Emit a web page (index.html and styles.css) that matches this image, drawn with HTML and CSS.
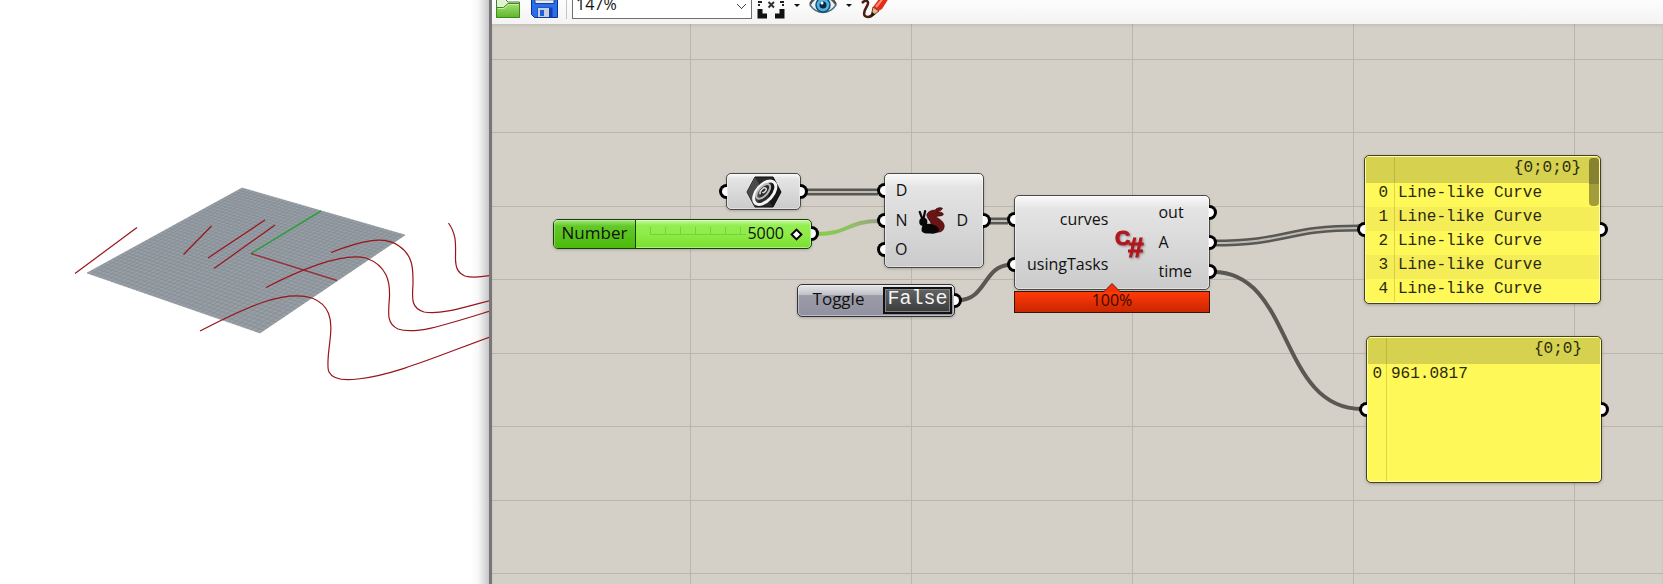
FILE: index.html
```html
<!DOCTYPE html>
<html lang="en">
<head>
    <meta charset="UTF-8">
    <meta name="viewport" content="width=device-width, initial-scale=1.0">
    <title>Grasshopper</title>
    <link rel="stylesheet" href="styles.css">
</head>
<body>
    <main class="workspace">
        <section class="viewport">
            <svg class="scene" width="489" height="584">
                <polygon class="plane" points="242,188 405,235 260,333 87,273"/>
                <path id="grid" class="plane-grid"/>
                <path class="axis-y" d="M251 253.5L321 211"/>
                <path class="axis-x" d="M251 253.5L337 280.5"/>
                <g class="curves">
                    <path d="M75 273.500L137 227.500"/>
                    <path d="M183.500 254.500L211.500 226"/>
                    <path d="M208 258L265 220"/>
                    <path d="M214 268.500L275 225"/>
                    <path d="M331 252.500C360 241 384 235 399 246C414 256 413 271 413 284C412 299 411 308 424 312C440 315 462 308 490 300.500"/>
                    <path d="M266 287.500C300 270 341 252 366 258C388 266 390 283 389.500 297C388 315 387 324 398 329C415 335 445 325 490 311"/>
                    <path d="M200 331C250 305 285 290 312 298C330 305 332 320 330.500 335C329 352 326 366 329 372C333 380 346 380.500 358 379C395 375 440 355 490 337"/>
                    <path d="M448.500 223C457 235 455.500 245 455.500 258C455.500 268 458 273 465 276C472 278 482 277 490 275.500"/>
                </g>
            </svg>
        </section>

        <section class="editor">
            <header class="toolbar">
                <button class="tool" aria-label="Open">
                    <svg width="28" height="28" viewBox="0 0 28 28">
                        <path d="M2.500 26.500V8H11L14 11H25.500V26.500Z" fill="#dff3d2" stroke="#4b7a3a"/>
                        <path d="M2.500 26.500V16.500H9.500L14 12.500H25.500V26.500Z" fill="url(#folder)" stroke="#3f8a20"/>
                        <path d="M4 17.500H10L14.500 13.500H24.500" fill="none" stroke="#c4f09c"/>
                        <defs>
                            <linearGradient id="folder" x1="0" y1="0" x2="0" y2="1">
                                <stop offset="0" stop-color="#a5e070"/>
                                <stop offset="1" stop-color="#5fb52c"/>
                            </linearGradient>
                        </defs>
                    </svg>
                </button>
                <button class="tool" aria-label="Save">
                    <svg width="28" height="28" viewBox="0 0 28 28">
                        <path d="M1.500 1.500H27.500V26.500H4.500L1.500 23.500Z" fill="#2b6fe8" stroke="#0b2f9c"/>
                        <path d="M5 1H24V12.500H5Z" fill="#e9edf3" stroke="#12409f"/>
                        <path d="M6 9.500H23" stroke="#b9bec8"/>
                        <path d="M7.500 16.500H22.500V26.500H7.500Z" fill="#143fae"/>
                        <path d="M8 17H19V26H8Z" fill="#c9cfda"/>
                        <path d="M10 19H14V25H10Z" fill="#1d5fd8"/>
                    </svg>
                </button>
                <span class="separator"></span>
                <select class="zoom" aria-label="Zoom">
                    <option>147%</option>
                </select>
                <button class="tool focus" aria-label="Zoom extents">
                    <svg width="28" height="28" viewBox="0 0 28 28">
                        <path d="M3 18V25H10M18 25H25V18M3 8V3H10M18 3H25V8" fill="none" stroke="#111" stroke-width="5"/>
                        <path d="M11.500 11L17 16.500M17 11L11.500 16.500" stroke="#333" stroke-width="2"/>
                        <path d="M1 11H5M1 14H3M23 11H27M25 14H27" stroke="#222" stroke-width="2"/>
                    </svg>
                </button>
                <button class="drop" aria-label="Zoom options"></button>
                <button class="tool flush" aria-label="Preview">
                    <svg width="28" height="28" viewBox="0 0 28 28">
                        <path d="M1 14C7 3 20 3 27 14C20 24 8 24 1 14Z" fill="#e6f3f8" stroke="#51707c" stroke-width="1.500"/>
                        <circle cx="14" cy="14" r="7" fill="#4fb4e2" stroke="#1b4d70" stroke-width="1.500"/>
                        <circle cx="14" cy="14" r="3.500" fill="#082842"/>
                        <circle cx="13" cy="12" r="1.500" fill="#fff"/>
                        <path d="M1 13C7 1 20 1 27 13" fill="none" stroke="#5b4a42" stroke-width="2"/>
                    </svg>
                </button>
                <button class="drop" aria-label="Preview options"></button>
                <button class="tool flush" aria-label="Sketch">
                    <svg width="28" height="28" viewBox="0 0 28 28">
                        <path d="M1 12C5 8 9 10 6 15C3 20 1 26 7 26C11 26 12 23 13 20" fill="none" stroke="#4a1c16" stroke-width="2.500"/>
                        <path d="M12 16L21 4L28 7L21 18L14 22Z" fill="#e22c1c"/>
                        <path d="M15 16L24 5" stroke="#ff8f78" stroke-width="2"/>
                        <path d="M12 16L18 20L10 26Z" fill="#e5b48c" stroke="#7a3a22"/>
                        <path d="M11 21L14.500 23.500L9.500 26.500Z" fill="#2a120c"/>
                    </svg>
                </button>
            </header>

            <div class="canvas">
                <svg class="wires">
                    <defs>
                        <linearGradient id="green-wire">
                            <stop offset="0" stop-color="#82cf45"/>
                            <stop offset="0.6" stop-color="#93bd67"/>
                            <stop offset="1" stop-color="#9a9f88"/>
                        </linearGradient>
                    </defs>
                    <g class="wire-outer">
                        <path d="M314 168H386"/>
                        <path d="M497 197H516"/>
                        <path d="M721 219C797 219 792 204 868 204"/>
                    </g>
                    <g class="wire-inner">
                        <path d="M314 168H386"/>
                        <path d="M497 197H516"/>
                        <path d="M721 219C797 219 792 204 868 204"/>
                    </g>
                    <g class="wire">
                        <path d="M325 210C356 210 356 197 387 197" stroke="url(#green-wire)"/>
                        <path d="M467 276C494 276 492 241 518 241"/>
                        <path d="M721 248C802 248 786 385 870 385"/>
                    </g>
                </svg>

                <div class="node param" id="geometry">
                    <i class="port in"></i>
                    <svg width="36" height="32" viewBox="0 0 36 32">
                        <path d="M9 1H27L35 16L27 31H9L1 16Z" fill="#2b2b2b" stroke="#111"/>
                        <path d="M9 1L1 16L9 31L14 20L13 8Z" fill="#4a4a4a"/>
                        <path d="M27 1L35 16L27 31L22 24Z" fill="#161616"/>
                        <g transform="rotate(-48 18 16)" fill="none">
                            <ellipse cx="18" cy="17" rx="14" ry="8" stroke="#f4f4f4" stroke-width="3"/>
                            <ellipse cx="18" cy="15" rx="9" ry="4.500" stroke="#b9b9b9" stroke-width="2"/>
                            <path d="M14 15C14 12 22 12 22 15C22 17 16 17 17 15" stroke="#ddd" stroke-width="1.500"/>
                        </g>
                    </svg>
                    <i class="port out"></i>
                </div>

                <div class="node slider" id="number">
                    <label for="count">Number</label>
                    <div class="track">
                        <input type="range" id="count" min="0" max="5000" value="5000">
                        <output for="count">5000</output>
                    </div>
                    <i class="port out"></i>
                </div>

                <div class="node component" id="populate">
                    <ul class="inputs">
                        <li><i class="port in"></i>D</li>
                        <li><i class="port in"></i>N</li>
                        <li><i class="port in"></i>O</li>
                    </ul>
                    <svg width="32" height="32" viewBox="0 0 32 32">
                        <path d="M11 9C12 5 17 4 20 4C22 1 27 1 28 2C28 4 24 5 22 6C25 6 29 6 29 9C27 11 23 10 21 11C22 13 29 15 30 21C30 27 26 29 20 28L15 20C17 17 11 14 11 9Z" fill="#6b1416" stroke="#3d0b0c"/>
                        <path d="M3 6L6 14M9 5L7 14" stroke="#080808" stroke-width="2.500" stroke-linecap="round"/>
                        <ellipse cx="7" cy="17" rx="4.500" ry="4.500" fill="#080808"/>
                        <path d="M8 20C12 18 18 19 22 22C27 26 23 30 17 30C11 30 5 30 5 26C5 23 6 21 8 20Z" fill="#080808"/>
                    </svg>
                    <ul class="outputs">
                        <li>D<i class="port out"></i></li>
                    </ul>
                </div>

                <div class="node toggle" id="toggle">
                    <label for="tasks">Toggle</label>
                    <button id="tasks">False</button>
                    <i class="port out"></i>
                </div>

                <div class="node component" id="script">
                    <ul class="inputs">
                        <li><i class="port in"></i>curves</li>
                        <li><i class="port in"></i>usingTasks</li>
                    </ul>
                    <svg class="csharp" width="34" height="40" viewBox="0 0 34 40">
                        <text x="1" y="22">C</text>
                        <text x="14" y="34" class="sharp">#</text>
                    </svg>
                    <ul class="outputs">
                        <li>out<i class="port out"></i></li>
                        <li>A<i class="port out"></i></li>
                        <li>time<i class="port out"></i></li>
                    </ul>
                    <div class="profiler">100%</div>
                </div>

                <div class="node panel" id="curve-list">
                    <i class="port in"></i>
                    <table>
                        <thead>
                            <tr><th class="index"></th><th>{0;0;0}</th></tr>
                        </thead>
                        <tbody>
                            <tr><td class="index">0</td><td>Line-like Curve</td></tr>
                            <tr><td class="index">1</td><td>Line-like Curve</td></tr>
                            <tr><td class="index">2</td><td>Line-like Curve</td></tr>
                            <tr><td class="index">3</td><td>Line-like Curve</td></tr>
                            <tr><td class="index">4</td><td>Line-like Curve</td></tr>
                        </tbody>
                    </table>
                    <span class="scrollbar"></span>
                    <i class="port out"></i>
                </div>

                <div class="node panel" id="timing">
                    <i class="port in"></i>
                    <table>
                        <thead>
                            <tr><th class="index"></th><th>{0;0}</th></tr>
                        </thead>
                        <tbody>
                            <tr><td class="index">0</td><td>961.0817</td></tr>
                        </tbody>
                    </table>
                    <i class="port out"></i>
                </div>
            </div>
        </section>
    </main>

    <script src="script.js"></script>
</body>
</html>
```
FILE: styles.css
```css
* {
    box-sizing: border-box;
}

body {
    margin: 0;
    font-family: "Open Sans", "Noto Sans", sans-serif;
    font-size: 16px;
    color: #111;
}

button, select, input {
    margin: 0;
    padding: 0;
    font: inherit;
    color: inherit;
}

ul {
    margin: 0;
    padding: 0;
    list-style: none;
}

.workspace {
    display: flex;
    height: 100vh;
    overflow: hidden;
}

/* 3d view */
.viewport {
    flex: 0 0 489px;
    overflow: hidden;
    background: linear-gradient(to right, rgba(0,0,0,0) 0, rgba(0,0,0,0.03) 40%, rgba(0,0,0,0.22) 100%) right / 18px 100% no-repeat #fff;
}

.scene {
    display: block;
}

.plane {
    fill: #979ea4;
}

.plane-grid {
    fill: none;
    stroke: #828a93;
    stroke-width: 0.6;
}

.axis-x, .axis-y {
    fill: none;
    stroke: #94343c;
    stroke-width: 1.5;
}

.axis-y {
    stroke: #2f9c3f;
}

.curves {
    fill: none;
    stroke: #99141c;
    stroke-width: 1.2;
}

/* editor window */
.editor {
    flex: 1;
    min-width: 0;
    display: flex;
    flex-direction: column;
    border-left: 3px solid #77757a;
}

.toolbar {
    flex: 0 0 24px;
    display: flex;
    align-items: flex-end;
    padding: 0 0 5px 2px;
    overflow: hidden;
    background: linear-gradient(#fdfdfd, #f3f3f3);
}

.tool {
    flex: none;
    width: 28px;
    height: 28px;
    margin-right: 8px;
    border: 0;
    background: none;
}

.tool svg {
    display: block;
}

.tool.focus, .tool.flush {
    margin-right: 0;
}

.separator {
    width: 1px;
    height: 28px;
    margin-right: 5px;
    background: #c4c4c4;
}

.zoom {
    flex: none;
    width: 180px;
    height: 28px;
    margin-right: 5px;
    padding: 0 3px 2px;
    appearance: none;
    border: 1px solid #707070;
    border-radius: 0;
    background: #fff;
    background-image: linear-gradient(45deg, transparent 44%, #444 44%, #444 58%, transparent 58%), linear-gradient(-45deg, transparent 44%, #444 44%, #444 58%, transparent 58%);
    background-size: 5px 5px;
    background-position: 164px 12px, 168px 12px;
    background-repeat: no-repeat;
}

.drop {
    flex: none;
    display: flex;
    justify-content: center;
    width: 24px;
    height: 28px;
    padding-top: 13px;
    border: 0;
    background: none;
}

.drop::after {
    content: "";
    border: 3px solid transparent;
    border-top-color: #111;
    border-bottom: 0;
}

/* canvas */
.canvas {
    flex: 1;
    position: relative;
    overflow: hidden;
    background-color: #d4d0c8;
    background-image:
        linear-gradient(to right, #bab6af 1px, transparent 1px),
        linear-gradient(#bab6af 1px, transparent 1px),
        linear-gradient(#bab6af 1px, transparent 1px);
    background-size: 221px 100%, 100% 147px, 100% 147px;
    background-position: 198px 0, 0 35px, 0 108px;
    box-shadow: inset 0 2px 3px rgba(0,0,0,0.08);
}

.wires {
    position: absolute;
    inset: 0;
    width: 100%;
    height: 100%;
}

.wires path {
    fill: none;
}

.wire {
    stroke: #5a5853;
    stroke-width: 4;
}

.wire-outer {
    stroke: #5a5853;
    stroke-width: 7;
}

.wire-inner {
    stroke: #bdbab3;
    stroke-width: 2;
}

/* nodes */
.node {
    position: absolute;
    display: flex;
    align-items: center;
    border: 1px solid #4a4a4a;
    border-radius: 5px;
    background: linear-gradient(#fafafa 0, #e4e4e4 14%, #cbcbcb 100%);
    box-shadow: inset 0 0 0 1px rgba(255,255,255,0.4), 0 1px 3px rgba(0,0,0,0.2);
}

#geometry { left: 234px; top: 149px; width: 75px; height: 37px; }
#number { left: 61px; top: 195px; width: 259px; height: 30px; }
#populate { left: 392px; top: 149px; width: 100px; height: 95px; }
#toggle { left: 305px; top: 260px; width: 158px; height: 33px; }
#script { left: 522px; top: 171px; width: 196px; height: 95px; }
#curve-list { left: 872px; top: 131px; width: 237px; height: 149px; }
#timing { left: 874px; top: 312px; width: 236px; height: 147px; }

.port {
    position: absolute;
    top: 50%;
    width: 8px;
    height: 15px;
    margin-top: -8px;
    border: 3px solid #000;
    background: #fff;
}

.port.in {
    left: -8px;
    border-right: 0;
    border-radius: 8px 0 0 8px;
}

.port.out {
    right: -8px;
    border-left: 0;
    border-radius: 0 8px 8px 0;
}

.param {
    justify-content: center;
}

.component {
    justify-content: space-between;
}

.inputs, .outputs {
    align-self: stretch;
    display: flex;
    flex-direction: column;
    padding: 2px 0;
}

.inputs li, .outputs li {
    flex: 1;
    position: relative;
    display: flex;
    align-items: center;
    padding: 0 10px 2px;
    line-height: 20px;
}

.inputs li {
    justify-content: flex-end;
}

#populate .outputs li {
    padding-right: 15px;
}

#script .outputs li {
    padding-right: 17px;
}

#script .inputs li {
    padding-right: 6px;
    padding-left: 12px;
}

.csharp text {
    font: bold 21px "Liberation Sans", sans-serif;
    fill: #b3161e;
    stroke: #b3161e;
    filter: drop-shadow(1px 1px 1px rgba(0,0,0,0.4));
}

.csharp .sharp {
    font-size: 28px;
}

.profiler {
    position: absolute;
    left: -1px;
    right: -1px;
    top: 95px;
    height: 22px;
    border: 1px solid #3a1208;
    background: linear-gradient(#ff3a08, #c92600);
    color: #3a0a00;
    line-height: 16px;
    text-align: center;
}

.profiler::before {
    content: "";
    position: absolute;
    left: 50%;
    top: -8px;
    margin-left: -8px;
    border: 8px solid transparent;
    border-top: 0;
    border-bottom-color: #f03406;
    filter: drop-shadow(0 -1px 0 #6a2414);
}

.slider {
    border-color: #16400a;
    background: linear-gradient(#c5f8a0 0, #93ee50 20%, #8eec48 50%, #7adf2e 100%);
}

.slider label {
    align-self: stretch;
    width: 82px;
    border-right: 1px solid #16400a;
    border-radius: 4px 0 0 4px;
    background: linear-gradient(#a0e878 0, #62c928 22%, #4db90c 100%);
    box-shadow: inset 1px 1px 0 rgba(255,255,255,0.3);
    font-size: 17px;
    line-height: 25px;
    text-align: center;
}

.track {
    flex: 1;
    position: relative;
    display: flex;
    padding: 0 10px 0 14px;
}

.track input {
    flex: 1;
    min-width: 0;
    height: 14px;
    appearance: none;
    background:
        repeating-linear-gradient(to right, #76d040 0, #76d040 1px, transparent 1px, transparent 15px) 0 0 / 96px 7px no-repeat,
        linear-gradient(#76d040, #76d040) 0 7px / 96px 1px no-repeat;
}

.track input::-webkit-slider-thumb {
    appearance: none;
    width: 9px;
    height: 9px;
    border: 2px solid #000;
    background: #fff;
    transform: rotate(45deg);
}

.track output {
    position: absolute;
    right: 27px;
    top: -4px;
    line-height: 20px;
}

.toggle {
    padding: 3px 2px;
    border-color: #333;
    background: linear-gradient(#e6e6ea 0, #c0c0c8 32%, #9c9ca8 34%, #9090a0 100%);
}

.toggle label {
    flex: 1;
    padding: 0 6px 4px 0;
    font-size: 17px;
    line-height: 24px;
    text-align: center;
}

.toggle button {
    width: 69px;
    height: 27px;
    padding-bottom: 3px;
    border: 2px solid #111;
    background: linear-gradient(#636363, #3c3c3c);
    box-shadow: inset 0 0 0 1px #858585;
    color: #f4f4f4;
    font-family: "Liberation Mono", monospace;
    font-size: 20px;
    line-height: 20px;
}

.panel {
    display: block;
    padding: 1px;
    border-color: #45421a;
    background: #fff859;
    box-shadow: inset 0 0 0 1px #fffcae, 0 1px 3px rgba(0,0,0,0.25);
    color: #2b2a10;
    font-family: "Liberation Mono", monospace;
}

.panel table {
    width: 100%;
    border-collapse: collapse;
}

.panel th {
    height: 26px;
    padding: 0 18px 4px 0;
    background: #d6d14e;
    font-weight: normal;
    text-align: right;
    line-height: 20px;
}

.panel td {
    height: 24px;
    padding: 0 0 4px 4px;
    line-height: 20px;
}

.panel tr:nth-child(even) td {
    background: #f4ed58;
}

.panel .index {
    width: 28px;
    padding: 0 6px 4px 0;
    text-align: right;
}

#timing .index {
    width: 19px;
    padding-right: 5px;
}

/* gutter line beside the item numbers */
.panel::after {
    content: "";
    position: absolute;
    top: 1px;
    bottom: 1px;
    left: 29px;
    width: 1px;
    background: rgba(120,110,0,0.25);
}

#timing::after {
    left: 19px;
}

.scrollbar {
    position: absolute;
    top: 2px;
    right: 1px;
    width: 10px;
    height: 48px;
    border-radius: 4px;
    background: linear-gradient(#868232 0, #868232 54%, #a29d38 54%);
}
```
FILE: script.js
```js
// Construction plane corners: top, right, bottom, left
const corners = [[242, 188], [405, 235], [260, 333], [87, 273]];
const cells = 40;

// Maps the unit square onto the four corners in perspective
function planePoint(u, v) {
    const [[x0, y0], [x1, y1], [x2, y2], [x3, y3]] = corners;
    const dx1 = x1 - x2, dx2 = x3 - x2, dx3 = x0 - x1 + x2 - x3;
    const dy1 = y1 - y2, dy2 = y3 - y2, dy3 = y0 - y1 + y2 - y3;
    const det = dx1 * dy2 - dx2 * dy1;
    const g = (dx3 * dy2 - dx2 * dy3) / det;
    const h = (dx1 * dy3 - dx3 * dy1) / det;
    const w = g * u + h * v + 1;
    const x = ((x1 - x0 + g * x1) * u + (x3 - x0 + h * x3) * v + x0) / w;
    const y = ((y1 - y0 + g * y1) * u + (y3 - y0 + h * y3) * v + y0) / w;
    return x.toFixed(1) + ' ' + y.toFixed(1);
}

let d = '';
for (let i = 0; i <= cells; i++) {
    const t = i / cells;
    d += `M${planePoint(t, 0)}L${planePoint(t, 1)}`;
    d += `M${planePoint(0, t)}L${planePoint(1, t)}`;
}
document.getElementById('grid').setAttribute('d', d);

const toggle = document.getElementById('tasks');
toggle.addEventListener('click', () => {
    toggle.textContent = toggle.textContent === 'False' ? 'True' : 'False';
});

const count = document.getElementById('count');
count.addEventListener('input', () => {
    document.querySelector('.track output').textContent = count.value;
});
```
